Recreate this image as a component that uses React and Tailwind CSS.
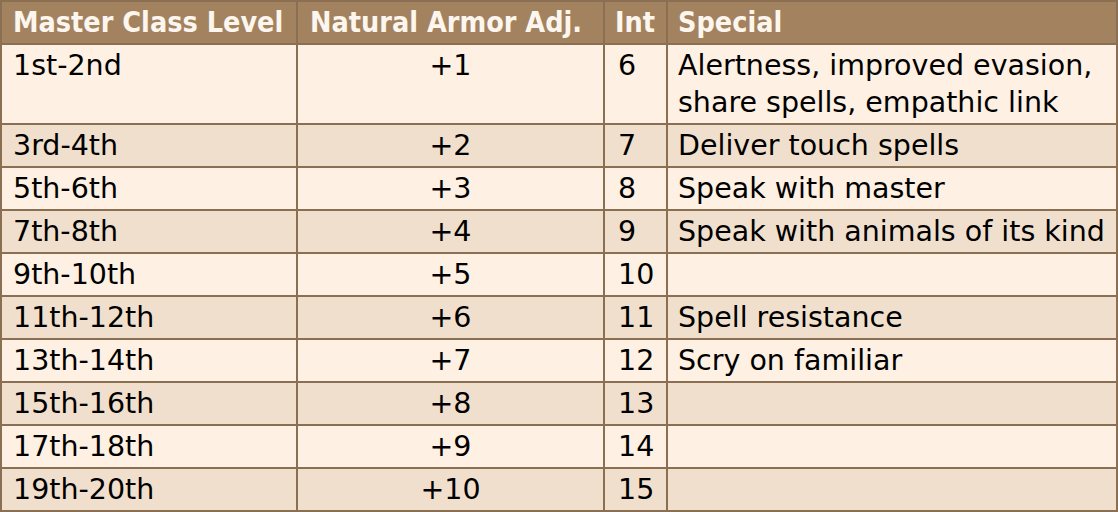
const rows = [
  ["1st-2nd", "+1", "6", ["Alertness, improved evasion,", "share spells, empathic link"]],
  ["3rd-4th", "+2", "7", ["Deliver touch spells"]],
  ["5th-6th", "+3", "8", ["Speak with master"]],
  ["7th-8th", "+4", "9", ["Speak with animals of its kind"]],
  ["9th-10th", "+5", "10", [""]],
  ["11th-12th", "+6", "11", ["Spell resistance"]],
  ["13th-14th", "+7", "12", ["Scry on familiar"]],
  ["15th-16th", "+8", "13", [""]],
  ["17th-18th", "+9", "14", [""]],
  ["19th-20th", "+10", "15", [""]],
];

export default function App() {
  return (
    <div className="w-[1118px] h-[512px] bg-[#8b6f53] p-[2px] grid grid-cols-[294px_305px_61px_448px] gap-[2px] content-start text-[28.5px] leading-[37px] text-black" style={{ fontFamily: '"DejaVu Sans", sans-serif' }}>
      {["Master Class Level", "Natural Armor Adj.", "Int", "Special"].map((h, i) => (
        <div
          key={h}
          className={`bg-[#a3835f] text-[#fdf6ee] font-bold py-[2px] h-[41px] whitespace-nowrap ${i === 0 ? "pl-[11px]" : i === 1 ? "pl-[12px]" : "pl-[10px]"}`}
          style={{ fontFamily: '"DejaVu Sans Condensed", "DejaVu Sans", sans-serif' }}
        >
          {h}
        </div>
      ))}
      {rows.map((r, idx) => {
        const bg = idx % 2 === 0 ? "bg-[#fef0e3]" : "bg-[#f0dfcc]";
        const h = idx === 0 ? "h-[78px]" : "h-[41px]";
        return [
          <div key={`a${idx}`} className={`${bg} ${h} pl-[11px] py-[2px] whitespace-nowrap`}>{r[0]}</div>,
          <div key={`b${idx}`} className={`${bg} ${h} text-center py-[2px] whitespace-nowrap`}>{r[1]}</div>,
          <div key={`c${idx}`} className={`${bg} ${h} pl-[13px] py-[2px] whitespace-nowrap`}>{r[2]}</div>,
          <div key={`d${idx}`} className={`${bg} ${h} pl-[10px] py-[2px] whitespace-nowrap`}>
            {r[3].map((l, j) => (
              <div key={j}>{l || "\u00a0"}</div>
            ))}
          </div>,
        ];
      })}
    </div>
  );
}
